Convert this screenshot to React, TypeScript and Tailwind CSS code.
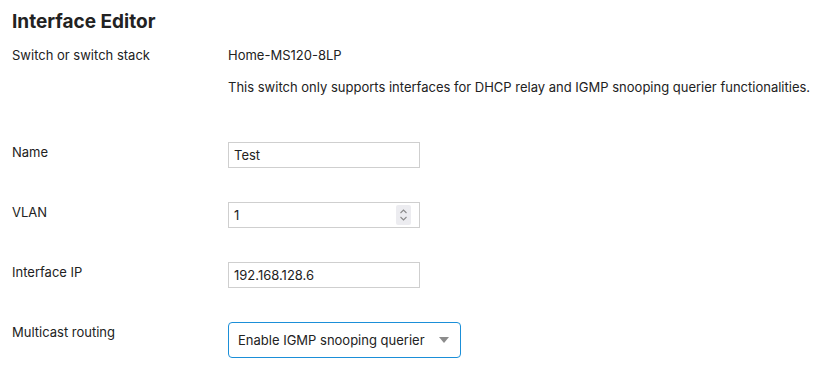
import React from 'react';

const Row: React.FC<{ label: string; children: React.ReactNode }> = ({ label, children }) => (
  <div className="grid grid-cols-[216px_1fr] items-start">
    <div className="leading-5">{label}</div>
    <div>{children}</div>
  </div>
);

const TextInput: React.FC<{ value: string }> = ({ value }) => (
  <div className="w-[192px] h-[26px] border border-[#cfcfcf] bg-white flex items-center px-[5px] leading-5">
    {value}
  </div>
);

export default function App() {
  return (
    <div className="w-[824px] h-[381px] bg-white text-[#222] text-[13px] px-3 pt-[10px] font-['Inter','Liberation_Sans',sans-serif]">
      <h1 className="text-[19px] font-bold leading-6 text-[#222]">Interface Editor</h1>

      <div className="mt-[11px] grid grid-cols-[216px_1fr]">
        <div className="leading-5">Switch or switch stack</div>
        <div>
          <div className="leading-5">Home-MS120-8LP</div>
          <div className="leading-5 mt-3">
            This switch only supports interfaces for DHCP relay and IGMP snooping querier functionalities.
          </div>
        </div>
      </div>

      <div className="mt-[45px] flex flex-col gap-[34px]">
        <Row label="Name">
          <TextInput value="Test" />
        </Row>
        <Row label="VLAN">
          <div className="w-[192px] h-[26px] border border-[#cfcfcf] bg-white flex items-center justify-between pl-[5px] pr-[8px] leading-5">
            <span>1</span>
            <span className="w-[15px] h-[20px] bg-[#ececf0] rounded-[2px] flex items-center justify-center">
              <svg width="9" height="14" viewBox="0 0 9 14" fill="none" stroke="#8a8a8a" strokeWidth="1.1">
                <path d="M1.5 5 L4.5 2 L7.5 5" />
                <path d="M1.5 9 L4.5 12 L7.5 9" />
              </svg>
            </span>
          </div>
        </Row>
        <Row label="Interface IP">
          <TextInput value="192.168.128.6" />
        </Row>
        <Row label="Multicast routing">
          <div className="w-[233px] h-[36px] border border-[#1b8fd8] rounded-[4px] bg-white flex items-center justify-between pl-[9px] pr-[11px] leading-5">
            <span>Enable IGMP snooping querier</span>
            <svg width="10" height="6" viewBox="0 0 10 6">
              <path d="M0 0 L10 0 L5 6 Z" fill="#8c8c8c" />
            </svg>
          </div>
        </Row>
      </div>
    </div>
  );
}
